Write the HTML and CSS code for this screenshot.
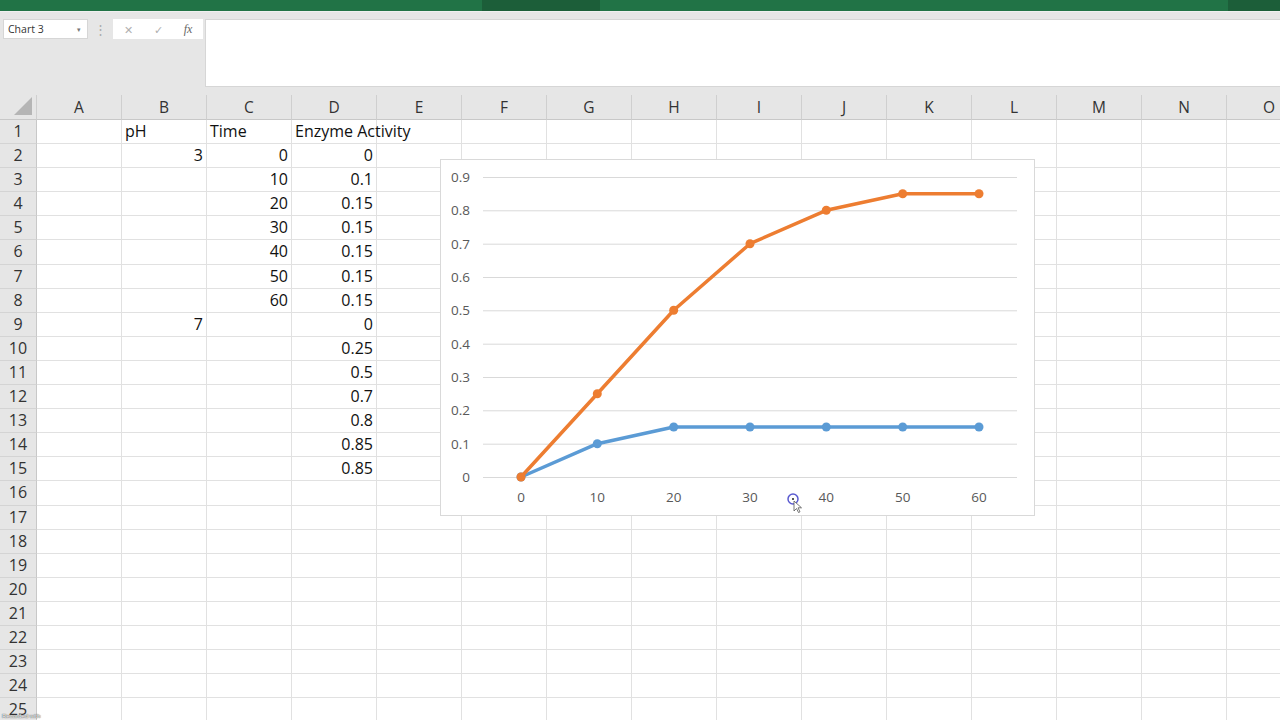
FILE: index.html
```html
<!DOCTYPE html>
<html>
<head>
<meta charset="utf-8">
<link rel="stylesheet" href="styles.css">
</head>
<body>
<div class="app">
  <div class="titlebar"><span class="tab t1"></span><span class="tab t2"></span></div>
  <div class="formula">
    <div class="namebox"><span>Chart 3</span><span class="dd">▾</span></div>
    <div class="dots">⋮</div>
    <div class="fbtns"><span class="x">✕</span><span class="ok">✓</span><span class="fx">fx</span></div>
    <div class="finput"></div>
  </div>
  <div class="sheet">
    <div class="row head"><b class="corner"></b><i>A</i><i>B</i><i>C</i><i>D</i><i>E</i><i>F</i><i>G</i><i>H</i><i>I</i><i>J</i><i>K</i><i>L</i><i>M</i><i>N</i><i>O</i></div>
    <div class="row"><b>1</b><i></i><i>pH</i><i>Time</i><i class="w">Enzyme Activity</i><i></i><i></i><i></i><i></i><i></i><i></i><i></i><i></i><i></i><i></i><i></i></div>
    <div class="row"><b>2</b><i></i><i class="n">3</i><i class="n">0</i><i class="n">0</i><i></i><i></i><i></i><i></i><i></i><i></i><i></i><i></i><i></i><i></i><i></i></div>
    <div class="row"><b>3</b><i></i><i></i><i class="n">10</i><i class="n">0.1</i><i></i><i></i><i></i><i></i><i></i><i></i><i></i><i></i><i></i><i></i><i></i></div>
    <div class="row"><b>4</b><i></i><i></i><i class="n">20</i><i class="n">0.15</i><i></i><i></i><i></i><i></i><i></i><i></i><i></i><i></i><i></i><i></i><i></i></div>
    <div class="row"><b>5</b><i></i><i></i><i class="n">30</i><i class="n">0.15</i><i></i><i></i><i></i><i></i><i></i><i></i><i></i><i></i><i></i><i></i><i></i></div>
    <div class="row"><b>6</b><i></i><i></i><i class="n">40</i><i class="n">0.15</i><i></i><i></i><i></i><i></i><i></i><i></i><i></i><i></i><i></i><i></i><i></i></div>
    <div class="row"><b>7</b><i></i><i></i><i class="n">50</i><i class="n">0.15</i><i></i><i></i><i></i><i></i><i></i><i></i><i></i><i></i><i></i><i></i><i></i></div>
    <div class="row"><b>8</b><i></i><i></i><i class="n">60</i><i class="n">0.15</i><i></i><i></i><i></i><i></i><i></i><i></i><i></i><i></i><i></i><i></i><i></i></div>
    <div class="row"><b>9</b><i></i><i class="n">7</i><i></i><i class="n">0</i><i></i><i></i><i></i><i></i><i></i><i></i><i></i><i></i><i></i><i></i><i></i></div>
    <div class="row"><b>10</b><i></i><i></i><i></i><i class="n">0.25</i><i></i><i></i><i></i><i></i><i></i><i></i><i></i><i></i><i></i><i></i><i></i></div>
    <div class="row"><b>11</b><i></i><i></i><i></i><i class="n">0.5</i><i></i><i></i><i></i><i></i><i></i><i></i><i></i><i></i><i></i><i></i><i></i></div>
    <div class="row"><b>12</b><i></i><i></i><i></i><i class="n">0.7</i><i></i><i></i><i></i><i></i><i></i><i></i><i></i><i></i><i></i><i></i><i></i></div>
    <div class="row"><b>13</b><i></i><i></i><i></i><i class="n">0.8</i><i></i><i></i><i></i><i></i><i></i><i></i><i></i><i></i><i></i><i></i><i></i></div>
    <div class="row"><b>14</b><i></i><i></i><i></i><i class="n">0.85</i><i></i><i></i><i></i><i></i><i></i><i></i><i></i><i></i><i></i><i></i><i></i></div>
    <div class="row"><b>15</b><i></i><i></i><i></i><i class="n">0.85</i><i></i><i></i><i></i><i></i><i></i><i></i><i></i><i></i><i></i><i></i><i></i></div>
    <div class="row"><b>16</b><i></i><i></i><i></i><i></i><i></i><i></i><i></i><i></i><i></i><i></i><i></i><i></i><i></i><i></i><i></i></div>
    <div class="row"><b>17</b><i></i><i></i><i></i><i></i><i></i><i></i><i></i><i></i><i></i><i></i><i></i><i></i><i></i><i></i><i></i></div>
    <div class="row"><b>18</b><i></i><i></i><i></i><i></i><i></i><i></i><i></i><i></i><i></i><i></i><i></i><i></i><i></i><i></i><i></i></div>
    <div class="row"><b>19</b><i></i><i></i><i></i><i></i><i></i><i></i><i></i><i></i><i></i><i></i><i></i><i></i><i></i><i></i><i></i></div>
    <div class="row"><b>20</b><i></i><i></i><i></i><i></i><i></i><i></i><i></i><i></i><i></i><i></i><i></i><i></i><i></i><i></i><i></i></div>
    <div class="row"><b>21</b><i></i><i></i><i></i><i></i><i></i><i></i><i></i><i></i><i></i><i></i><i></i><i></i><i></i><i></i><i></i></div>
    <div class="row"><b>22</b><i></i><i></i><i></i><i></i><i></i><i></i><i></i><i></i><i></i><i></i><i></i><i></i><i></i><i></i><i></i></div>
    <div class="row"><b>23</b><i></i><i></i><i></i><i></i><i></i><i></i><i></i><i></i><i></i><i></i><i></i><i></i><i></i><i></i><i></i></div>
    <div class="row"><b>24</b><i></i><i></i><i></i><i></i><i></i><i></i><i></i><i></i><i></i><i></i><i></i><i></i><i></i><i></i><i></i></div>
    <div class="row"><b>25</b><i></i><i></i><i></i><i></i><i></i><i></i><i></i><i></i><i></i><i></i><i></i><i></i><i></i><i></i><i></i></div>

    <div class="chart">
      <svg width="595" height="357" viewBox="0 0 595 357">
        <g stroke="#d9d9d9" stroke-width="1">
          <line x1="43" x2="577" y1="18.5" y2="18.5"/>
          <line x1="43" x2="577" y1="51.8" y2="51.8"/>
          <line x1="43" x2="577" y1="85.2" y2="85.2"/>
          <line x1="43" x2="577" y1="118.5" y2="118.5"/>
          <line x1="43" x2="577" y1="151.8" y2="151.8"/>
          <line x1="43" x2="577" y1="185.2" y2="185.2"/>
          <line x1="43" x2="577" y1="218.5" y2="218.5"/>
          <line x1="43" x2="577" y1="251.8" y2="251.8"/>
          <line x1="43" x2="577" y1="285.2" y2="285.2"/>
          <line x1="43" x2="577" y1="318.5" y2="318.5"/>
        </g>
        <g class="ylab" text-anchor="end">
          <text x="30" y="23">0.9</text>
          <text x="30" y="56">0.8</text>
          <text x="30" y="90">0.7</text>
          <text x="30" y="123">0.6</text>
          <text x="30" y="156">0.5</text>
          <text x="30" y="190">0.4</text>
          <text x="30" y="223">0.3</text>
          <text x="30" y="256">0.2</text>
          <text x="30" y="290">0.1</text>
          <text x="30" y="323">0</text>
        </g>
        <g class="xlab" text-anchor="middle">
          <text x="81" y="343">0</text>
          <text x="157.3" y="343">10</text>
          <text x="233.7" y="343">20</text>
          <text x="310" y="343">30</text>
          <text x="386.3" y="343">40</text>
          <text x="462.7" y="343">50</text>
          <text x="539" y="343">60</text>
        </g>
        <polyline fill="none" stroke="#5b9bd5" stroke-width="3.5" stroke-linejoin="round" points="81,318 157.3,284.7 233.7,268 310,268 386.3,268 462.7,268 539,268"/>
        <g fill="#5b9bd5">
          <circle cx="81" cy="318" r="4.5"/><circle cx="157.3" cy="284.7" r="4.5"/><circle cx="233.7" cy="268" r="4.5"/><circle cx="310" cy="268" r="4.5"/><circle cx="386.3" cy="268" r="4.5"/><circle cx="462.7" cy="268" r="4.5"/><circle cx="539" cy="268" r="4.5"/>
        </g>
        <polyline fill="none" stroke="#ed7d31" stroke-width="3.5" stroke-linejoin="round" points="81,318 157.3,234.7 233.7,151.3 310,84.7 386.3,51.3 462.7,34.7 539,34.7"/>
        <g fill="#ed7d31">
          <circle cx="81" cy="318" r="4.5"/><circle cx="157.3" cy="234.7" r="4.5"/><circle cx="233.7" cy="151.3" r="4.5"/><circle cx="310" cy="84.7" r="4.5"/><circle cx="386.3" cy="51.3" r="4.5"/><circle cx="462.7" cy="34.7" r="4.5"/><circle cx="539" cy="34.7" r="4.5"/>
        </g>
        <g class="cursor">
          <circle cx="353" cy="340" r="5" fill="none" stroke="#5a5ad0" stroke-width="1.5"/>
          <circle cx="353" cy="340" r="1" fill="#222"/>
          <path d="M354 342 L354 352 L356.5 349.5 L358.5 353.5 L360 352.8 L358 348.8 L361.5 348.8 Z" fill="#fff" stroke="#555" stroke-width="0.8"/>
        </g>
      </svg>
    </div>
  </div>
  <div class="watermark">Recorded with</div>
</div>
</body>
</html>
```

FILE: styles.css
```css
html, body {
  margin: 0;
  padding: 0;
}
body {
  width: 1280px;
  height: 720px;
  overflow: hidden;
  background: #ffffff;
  font-family: "Open Sans", "Noto Sans", "Liberation Sans", sans-serif;
}
.app {
  position: relative;
  width: 1280px;
  height: 720px;
  overflow: hidden;
}
.titlebar {
  height: 11px;
  background: #217346;
  position: relative;
  display: flex;
}
.titlebar .tab {
  display: block;
  height: 11px;
  background: #1c5e39;
}
.titlebar .t1 {
  margin-left: 482px;
  width: 118px;
}
.titlebar .t2 {
  margin-left: 628px;
  width: 52px;
}
.formula {
  height: 84px;
  background: #e6e6e6;
  border-top: 1px solid #f0f0f0;
  box-sizing: border-box;
  display: flex;
  align-items: flex-start;
  padding-top: 7px;
}
.namebox {
  margin-left: 3px;
  width: 85px;
  height: 20px;
  background: #fff;
  border: 1px solid #d6d6d6;
  box-sizing: border-box;
  display: flex;
  align-items: center;
  justify-content: space-between;
  padding: 0 6px 0 4px;
  font-size: 10.5px;
  color: #333;
}
.namebox .dd {
  font-size: 7px;
  color: #777;
}
.dots {
  width: 25px;
  text-align: center;
  color: #aaa;
  font-size: 13px;
  line-height: 20px;
}
.fbtns {
  width: 90px;
  height: 20px;
  background: #fff;
  display: flex;
  align-items: center;
  justify-content: space-around;
  color: #b0b0b0;
  font-size: 11px;
}
.fbtns .fx {
  font-family: "Liberation Serif", serif;
  font-style: italic;
  color: #666;
  font-size: 12px;
}
.finput {
  margin-left: 2px;
  flex: 1;
  height: 68px;
  background: #fff;
  border: 1px solid #d6d6d6;
  border-right: none;
  box-sizing: border-box;
}
.sheet {
  position: relative;
}
.row {
  display: flex;
  height: 24.1px;
}
.row b, .row i {
  display: block;
  flex: none;
  box-sizing: border-box;
  height: 100%;
  font-style: normal;
  font-weight: normal;
  line-height: 23px;
  white-space: nowrap;
}
.row b {
  width: 37px;
  background: #e6e6e6;
  border-right: 1px solid #c8c8c8;
  border-bottom: 1px solid #d4d4d4;
  text-align: center;
  font-size: 16px;
  color: #333;
}
.row i {
  width: 85px;
  border-right: 1px solid #e1e1e1;
  border-bottom: 1px solid #e1e1e1;
  padding: 0 3px;
  font-size: 16px;
  color: #111;
}
.row i.n {
  text-align: right;
  padding-right: 3px;
}
.row i.w {
  overflow: visible;
  position: relative;
  z-index: 1;
}
.row.head {
  height: 25px;
}
.row.head b, .row.head i {
  background: #e6e6e6;
  border-right: 1px solid #cfcfcf;
  border-bottom: 1px solid #c8c8c8;
  text-align: center;
  font-size: 15.5px;
  line-height: 24px;
  color: #333;
}
.row.head b.corner {
  position: relative;
}
.row.head b.corner::after {
  content: "";
  position: absolute;
  right: 4px;
  bottom: 4px;
  border-style: solid;
  border-width: 0 0 18px 18px;
  border-color: transparent transparent #b5b5b5 transparent;
}
.chart {
  position: absolute;
  left: 440px;
  top: 64px;
  width: 595px;
  height: 357px;
  background: #fff;
  border: 1px solid #d9d9d9;
  box-sizing: border-box;
  z-index: 2;
}
.chart svg {
  display: block;
  position: absolute;
  left: -1px;
  top: -1px;
}
.ylab text, .xlab text {
  font-family: "Open Sans", "Noto Sans", "Liberation Sans", sans-serif;
  font-size: 13.5px;
  fill: #595959;
}
.watermark {
  position: absolute;
  left: 2px;
  bottom: 1px;
  font-size: 6px;
  color: #fff;
  text-shadow: 0 0 1px #444, 0 0 1px #444;
  font-family: "Liberation Sans", sans-serif;
}
```
